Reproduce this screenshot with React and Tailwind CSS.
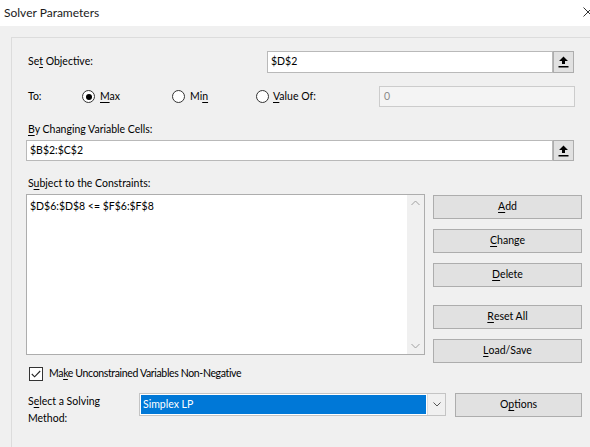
import React from 'react';

const FONT = { fontFamily: "Lato, 'Noto Sans', sans-serif" };

// underlined mnemonic letter
const U = ({ children }) => <span className="underline underline-offset-2">{children}</span>;

const UploadIcon = () => (
  <svg width="11" height="12" viewBox="0 0 11 12">
    <path d="M5.5 0.5 L10 5 L7 5 L7 8 L4 8 L4 5 L1 5 Z" fill="#000" />
    <rect x="0.5" y="10" width="10" height="1.5" fill="#000" />
  </svg>
);

const RefButton = () => (
  <div className="w-[21px] h-full bg-[#e1e1e1] border border-[#adadad] flex items-center justify-center shrink-0">
    <UploadIcon />
  </div>
);

const Radio = ({ checked }) => (
  <div className="w-[13px] h-[13px] rounded-full border border-[#333] bg-white flex items-center justify-center shrink-0">
    {checked && <div className="w-[6px] h-[6px] rounded-full bg-black" />}
  </div>
);

const Btn = ({ children, className = '' }) => (
  <div className={`h-[24px] bg-[#e1e1e1] border border-[#adadad] flex items-center justify-center text-[10.5px] text-black ${className}`}>
    {children}
  </div>
);

export default function App() {
  return (
    <div className="w-[590px] h-[447px] bg-[#f0f0f0] overflow-hidden text-[10.5px] text-black" style={FONT}>
      {/* Title bar */}
      <div className="h-[26px] bg-white flex items-center justify-between pl-[4px]">
        <span className="text-[12px] text-[#1a1a1a] mb-[1px]">Solver Parameters</span>
        <svg width="10" height="10" viewBox="0 0 10 10" className="mr-[-3px] mb-[3px]">
          <path d="M0.5 0.5 L9.5 9.5 M9.5 0.5 L0.5 9.5" stroke="#333" strokeWidth="1" />
        </svg>
      </div>

      {/* Frame */}
      <div className="ml-[11px] mt-[11px] border-l border-t border-[#dcdcdc] pl-[14px] pt-[13px] h-[420px]">
        {/* Set objective */}
        <div className="flex items-center h-[22px]">
          <span className="w-[241px] pl-[2px]">Se<U>t</U> Objective:</span>
          <div className="w-[286px] h-full bg-white border border-[#b9b9b9] flex items-center pl-[3px]">$D$2</div>
          <RefButton />
        </div>

        {/* To */}
        <div className="flex items-center h-[21px] mt-[13px]">
          <span className="w-[56px] pl-[2px]">To:</span>
          <div className="w-[90px] flex items-center gap-[5px]">
            <Radio checked />
            <span><U>M</U>ax</span>
          </div>
          <div className="w-[84px] flex items-center gap-[5px]">
            <Radio />
            <span>Mi<U>n</U></span>
          </div>
          <div className="w-[123px] flex items-center gap-[4px]">
            <Radio />
            <span><U>V</U>alue Of:</span>
          </div>
          <div className="w-[196px] h-full bg-[#f4f4f4] border border-[#cccccc] flex items-center pl-[4px] text-[#8a8a8a]">0</div>
        </div>

        {/* By changing */}
        <div className="mt-[14px] h-[16px] leading-[16px] pl-[2px]"><U>B</U>y Changing Variable Cells:</div>
        <div className="flex items-center h-[21px] mt-[3px]">
          <div className="w-[527px] h-full bg-white border border-[#b9b9b9] flex items-center pl-[3px]">$B$2:$C$2</div>
          <RefButton />
        </div>

        {/* Constraints */}
        <div className="mt-[14px] h-[16px] leading-[16px] pl-[2px]">S<U>u</U>bject to the Constraints:</div>
        <div className="flex items-start h-[161px] mt-[3px]">
          <div className="w-[399px] h-[161px] bg-white border border-[#adadad] flex">
            <div className="flex-1 pl-[3px] pt-[3px] leading-[16px]">$D$6:$D$8 &lt;= $F$6:$F$8</div>
            <div className="w-[17px] h-full bg-[#f0f0f0] flex flex-col items-center justify-between py-[5px]">
              <svg width="9" height="6" viewBox="0 0 9 6"><path d="M0.5 5 L4.5 1 L8.5 5" stroke="#a0a0a0" fill="none" /></svg>
              <svg width="9" height="6" viewBox="0 0 9 6"><path d="M0.5 1 L4.5 5 L8.5 1" stroke="#a0a0a0" fill="none" /></svg>
            </div>
          </div>
          <div className="w-[149px] ml-[8px] flex flex-col">
            <Btn className="mt-[1px]"><U>A</U>dd</Btn>
            <Btn className="mt-[10px]"><U>C</U>hange</Btn>
            <Btn className="mt-[10px]"><U>D</U>elete</Btn>
            <Btn className="mt-[18px]"><U>R</U>eset All</Btn>
            <Btn className="mt-[10px]"><U>L</U>oad/Save</Btn>
          </div>
        </div>

        {/* Checkbox */}
        <div className="flex items-center mt-[12px] h-[14px] pl-[3px] gap-[6px]">
          <div className="w-[14px] h-[14px] border border-[#333] bg-white flex items-center justify-center">
            <svg width="10" height="8" viewBox="0 0 10 8"><path d="M0.8 4 L3.6 6.8 L9.2 1" stroke="#222" strokeWidth="1.1" fill="none" /></svg>
          </div>
          <span className="tracking-[-0.35px]">Ma<U>k</U>e Unconstrained Variables Non-Negative</span>
        </div>

        {/* Solving method */}
        <div className="flex items-start mt-[12px]">
          <div className="w-[113px] pl-[2px] leading-[17px]">S<U>e</U>lect a Solving<br />Method:</div>
          <div className="w-[307px] h-[23px] bg-white border border-[#c4c4c4] flex items-stretch">
            <div className="flex-1 m-[1px] bg-[#0078d7] text-white flex items-center pl-[2px]">Simplex LP</div>
            <div className="w-[18px] bg-[#f0f0f0] border-l border-[#dcdcdc] flex items-center justify-center">
              <svg width="8" height="5" viewBox="0 0 8 5"><path d="M0.5 0.5 L4 4 L7.5 0.5" stroke="#555" fill="none" /></svg>
            </div>
          </div>
          <Btn className="w-[127px] ml-[9px] h-[23px]">O<U>p</U>tions</Btn>
        </div>

        {/* Solving method group box (cut off by window edge) */}
        <div className="mt-[24px] w-[548px] h-[20px] border-l border-t border-r border-[#dcdcdc] pl-[10px] pt-[4px]">
          Solving Method
        </div>
      </div>
    </div>
  );
}
